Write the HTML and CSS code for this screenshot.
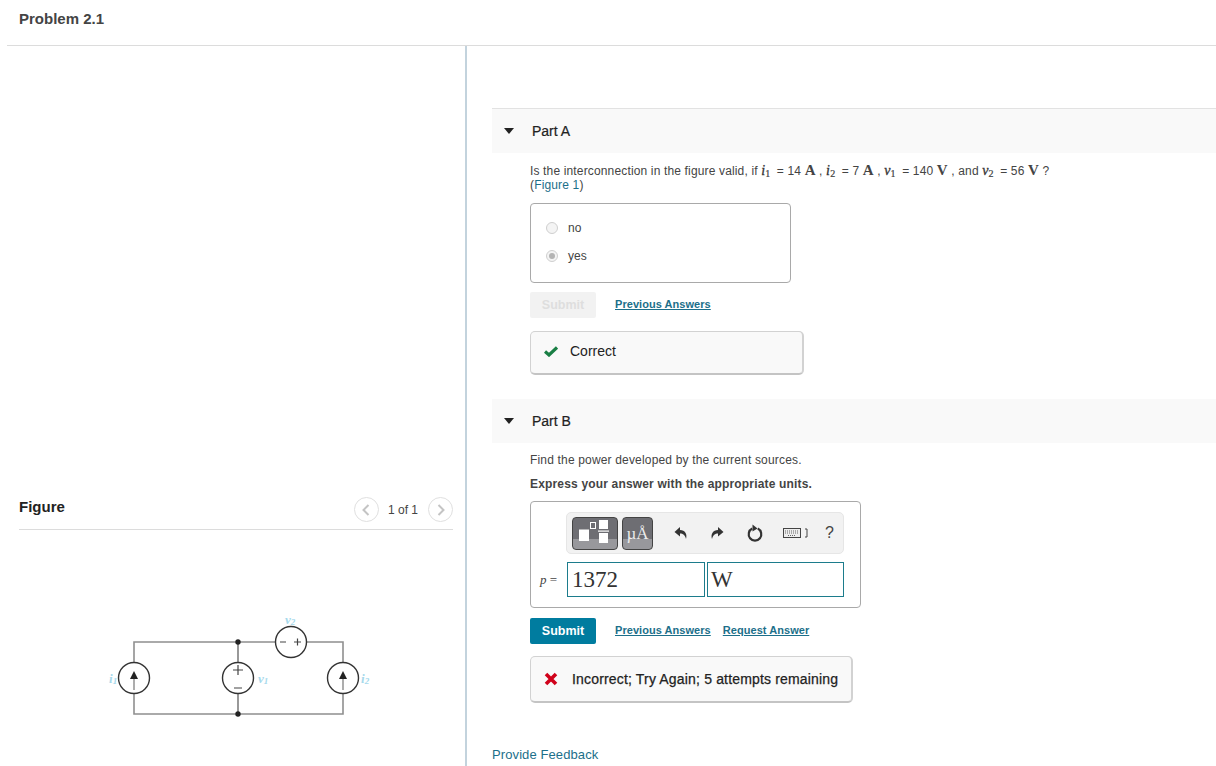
FILE: index.html
```html
<!DOCTYPE html>
<html lang="en">
<head>
<meta charset="utf-8">
<title>Problem 2.1</title>
<link rel="stylesheet" href="styles.css">
</head>
<body>
<header class="page-head"><h1>Problem 2.1</h1></header>
<main class="layout">
  <aside class="figure-pane">
    <div class="figure-head">
      <h2>Figure</h2>
      <div class="pager">
        <span class="round"><svg width="8" height="12" viewBox="0 0 8 12"><path d="M6.500 1 L1.500 6 L6.500 11" fill="none" stroke="#c4c4c4" stroke-width="2"/></svg></span>
        <span class="pager-text">1 of 1</span>
        <span class="round"><svg width="8" height="12" viewBox="0 0 8 12"><path d="M1.500 1 L6.500 6 L1.500 11" fill="none" stroke="#c4c4c4" stroke-width="2"/></svg></span>
      </div>
    </div>
    <svg class="circuit" width="270" height="115" viewBox="0 0 270 115">
      <g fill="none" stroke="#8f8f8f" stroke-width="1.600">
        <path d="M34 52 V32 H175 M207 32 H243 V52"/>
        <path d="M34 84 V104 H243 V84"/>
      </g>
      <g fill="none" stroke="#555" stroke-width="1.200">
        <path d="M138 32 V53 M138 84 V104"/>
      </g>
      <g fill="#fff" stroke="#333" stroke-width="1.400">
        <circle cx="34" cy="68" r="15.500"/>
        <circle cx="138" cy="68" r="15.500"/>
        <circle cx="191" cy="32" r="15.500"/>
        <circle cx="243" cy="68" r="15.500"/>
      </g>
      <g fill="none" stroke="#777" stroke-width="1.200">
        <path d="M34 64 V80 M243 64 V80"/>
      </g>
      <g fill="none" stroke="#444" stroke-width="1.200">
        <path d="M133 60 H143 M138 55 V65 M134 78 H142"/>
        <path d="M180 32 H186 M194 32 H201 M197.500 28.500 V35.500"/>
      </g>
      <path d="M34 61 L30 69 H38 Z M243 61 L239 69 H247 Z" fill="#222"/>
      <circle cx="138" cy="32" r="2.700" fill="#222"/>
      <circle cx="138" cy="104" r="2.700" fill="#222"/>
      <g class="circuit-label">
        <text x="9" y="73">i<tspan class="circuit-sub" dy="1">1</tspan></text>
        <text x="158" y="73">v<tspan class="circuit-sub" dy="1">1</tspan></text>
        <text x="185" y="14">v<tspan class="circuit-sub" dy="1">2</tspan></text>
        <text x="261" y="73">i<tspan class="circuit-sub" dy="1">2</tspan></text>
      </g>
    </svg>
  </aside>
  <section class="question-pane">
    <div class="part-bar">
      <span class="caret"></span><h3>Part A</h3>
    </div>
    <div class="part-body part-a">
      <p class="prompt">Is the interconnection in the figure valid, if <i class="var">i</i><sub>1</sub> = 14 <b class="unit">A</b> , <i class="var">i</i><sub>2</sub> = 7 <b class="unit">A</b> , <i class="var">v</i><sub>1</sub> = 140 <b class="unit">V</b> , and <i class="var">v</i><sub>2</sub> = 56 <b class="unit">V</b> ?<br>(<a class="plain-link">Figure 1</a>)</p>
      <div class="choices">
        <div class="choice"><span class="radio"></span>no</div>
        <div class="choice"><span class="radio checked"></span>yes</div>
      </div>
      <div class="actions">
        <button class="btn disabled">Submit</button>
        <a class="action-link">Previous Answers</a>
      </div>
      <div class="feedback correct">
        <svg width="14" height="11" viewBox="0 0 14 11"><path d="M1 5.500 L5 9 L13 1.500" fill="none" stroke="#1a7f45" stroke-width="3.200"/></svg>
        <span>Correct</span>
      </div>
    </div>
    <div class="part-bar">
      <span class="caret"></span><h3>Part B</h3>
    </div>
    <div class="part-body part-b">
      <p class="find">Find the power developed by the current sources.</p>
      <p class="express">Express your answer with the appropriate units.</p>
      <div class="answer-box">
        <div class="toolbar">
          <span class="tool-btn templates">
            <svg width="44" height="31" viewBox="0 0 44 31">
              <rect x="6" y="11.500" width="10" height="11.500" fill="#fff"/>
              <rect x="17.500" y="4.500" width="5" height="6" fill="none" stroke="#fff"/>
              <rect x="26" y="2" width="9" height="9" fill="#fff"/>
              <rect x="25" y="12.500" width="11" height="1.200" fill="#fff"/>
              <rect x="26" y="15" width="9" height="10" fill="#fff"/>
            </svg>
          </span>
          <span class="tool-btn units">µÅ</span>
          <span class="tool-icons">
            <svg width="14" height="14" viewBox="0 0 14 14"><path d="M6 1 L0.500 6 L6 10.500 V7.500 C9 7.500 11 9 12 13 C13.500 8 11 4 6 4 Z" fill="#333"/></svg>
            <svg width="14" height="14" viewBox="0 0 14 14"><path d="M8 1 L13.500 6 L8 10.500 V7.500 C5 7.500 3 9 2 13 C0.500 8 3 4 8 4 Z" fill="#333"/></svg>
            <svg width="16" height="18" viewBox="0 0 16 18"><path d="M5.200 4.600 A6.300 6.300 0 1 0 10.800 4.600" fill="none" stroke="#333" stroke-width="2.200"/><path d="M5.500 0.500 L10.500 4.500 L5.500 7.500 Z" fill="#333"/></svg>
            <svg class="kbd" width="26" height="12" viewBox="0 0 26 12"><rect x="0.500" y="1.500" width="17" height="9" fill="#eee" stroke="#444"/><path d="M2 4 H16 M2 6 H16 M5 8.500 H13" stroke="#666" stroke-dasharray="1 1"/><path d="M22 2 H24 V10 H22" fill="none" stroke="#444"/></svg>
            <span class="help">?</span>
          </span>
        </div>
        <div class="fields">
          <span class="label"><i>p</i> =</span>
          <span class="field value">1372</span>
          <span class="field unit-field">W</span>
        </div>
      </div>
      <div class="actions">
        <button class="btn primary">Submit</button>
        <a class="action-link">Previous Answers</a>
        <a class="action-link second">Request Answer</a>
      </div>
      <div class="feedback incorrect">
        <svg width="14" height="14" viewBox="0 0 14 14"><path d="M2 2 L12 12 M12 2 L2 12" fill="none" stroke="#d0021b" stroke-width="3.600"/></svg>
        <span>Incorrect; Try Again; 5 attempts remaining</span>
      </div>
    </div>
    <a class="provide">Provide Feedback</a>
  </section>
</main>
</body>
</html>
```
FILE: styles.css
```css
* { box-sizing: border-box; }
html, body { margin: 0; padding: 0; height: 766px; overflow: hidden; background: #fff; }
body { font-family: "Liberation Sans", Arial, sans-serif; color: #333; font-size: 12px; }
h1, h2, h3, p { margin: 0; }

.page-head { height: 46px; margin-left: 7px; border-bottom: 1px solid #dcdcdc; padding: 10px 0 0 12px; }
.page-head h1 { font-size: 15px; line-height: 18px; font-weight: bold; color: #444; }

.layout { display: flex; height: 720px; }
.figure-pane { width: 467px; flex: none; border-right: 2px solid #c3d3dd; padding: 450px 12px 0 19px; }
.figure-head { display: flex; justify-content: space-between; align-items: flex-start; height: 34px; border-bottom: 1px solid #dcdcdc; }
.figure-head h2 { font-size: 15px; line-height: 18px; margin-top: 2px; font-weight: bold; color: #222; }
.pager { display: flex; align-items: center; gap: 10px; margin-top: 1px; }
.round { width: 25px; height: 25px; border: 1px solid #e0e0e0; border-radius: 50%; display: flex; align-items: center; justify-content: center; }
.pager-text { font-size: 12px; color: #444; margin: 1px 0 0 -1px; }
.circuit { display: block; margin: 80px 0 0 81px; }
.circuit-label { font: italic bold 13px "Liberation Serif", serif; fill: #a6d9ec; }
.circuit-sub { font-size: 9px; }

.question-pane { flex: 1; padding: 62px 0 0 25px; min-width: 0; }
.part-bar { height: 45px; background: #f9f9f9; border-top: 1px solid #e2e2e2; display: flex; align-items: center; padding-left: 12px; }
.part-bar + .part-body + .part-bar { border-top: 0; height: 44px; }
.caret { width: 0; height: 0; border-left: 5px solid transparent; border-right: 5px solid transparent; border-top: 6px solid #222; margin-right: 18px; }
.part-bar h3 { font-size: 14px; line-height: 16px; font-weight: normal; color: #222; -webkit-text-stroke: 0.2px #222; }

.part-body { padding-left: 38px; }
.part-a { height: 246px; padding-top: 10px; }
.part-b { height: 303px; padding-top: 10px; }
.prompt { font-size: 12px; line-height: 14px; color: #444; letter-spacing: 0.15px; }
.var { font-family: "Liberation Serif", serif; font-size: 14px; color: #333; -webkit-text-stroke: 0.3px #333; }
.unit { font-family: "Liberation Serif", serif; font-size: 15px; color: #444; }
.prompt sub { font-family: "Liberation Serif", serif; font-size: 10px; line-height: 0; vertical-align: -2px; margin-right: 3px; -webkit-text-stroke: 0.2px #333; }
.plain-link, .provide { color: #1c6f8a; }

.choices { width: 261px; height: 80px; border: 1px solid #a9a9a9; border-radius: 4px; margin-top: 11px; padding-top: 10px; }
.choice { height: 28px; display: flex; align-items: center; padding-left: 15px; gap: 10px; color: #444; }
.radio { width: 12px; height: 12px; border-radius: 50%; border: 1px solid #cfcfcf; background: #f4f4f4; position: relative; }
.radio.checked::after { content: ""; position: absolute; left: 2px; top: 2px; width: 6px; height: 6px; border-radius: 50%; background: #b4b4b4; }

.actions { display: flex; align-items: center; margin-top: 9px; height: 26px; }
.answer-box + .actions { margin-top: 10px; }
.btn { width: 66px; height: 26px; border: 0; border-radius: 2px; font: bold 12.500px "Liberation Sans", Arial, sans-serif; padding: 0; }
.btn.disabled { background: #f2f2f2; color: #dedede; }
.btn.primary { background: #007c9f; color: #fff; }
.action-link { font-size: 11px; font-weight: bold; color: #1c6f8a; text-decoration: underline; margin: -2px 0 0 19px; letter-spacing: 0.05px; }
.action-link.second { margin-left: 12px; }

.feedback { display: flex; align-items: center; background: #f9f9f9; border: 1px solid #d2d2d2; border-bottom: 2px solid #c4c4c4; border-right: 2px solid #d2d2d2; border-radius: 5px; color: #222; font-size: 14px; }
.feedback.correct { width: 274px; height: 44px; margin-top: 13px; padding: 0 0 3px 13px; gap: 12px; }
.feedback.incorrect { width: 323px; height: 47px; margin-top: 12px; padding: 0 0 1px 13px; gap: 14px; -webkit-text-stroke: 0.25px #222; letter-spacing: 0.17px; }

.find { line-height: 14px; color: #444; letter-spacing: 0.17px; }
.express { line-height: 14px; margin-top: 10px; font-weight: bold; color: #444; letter-spacing: 0.17px; }
.answer-box { width: 331px; height: 107px; margin-top: 10px; border: 1px solid #a9a9a9; border-radius: 4px; padding: 10px 16px 0 7px; }
.toolbar { width: 278px; height: 42px; margin-left: 28px; background: #f2f2f2; border: 1px solid #e6e6e6; border-radius: 5px; display: flex; align-items: center; padding-left: 5px; gap: 4px; }
.tool-btn { height: 33px; border-radius: 4px; border: 1px solid #444; background: linear-gradient(#6e6e73 0, #6e6e73 67%, #98989c 67%, #98989c 100%); display: flex; align-items: center; justify-content: center; color: #fff; }
.templates { width: 46px; }
.units { width: 31px; font: 17px "Liberation Serif", serif; color: #ededed; padding-top: 2px; }
.tool-icons { display: flex; align-items: center; margin-left: 17px; color: #444; }
.tool-icons svg:nth-child(2) { margin-left: 22px; }
.tool-icons svg:nth-child(3) { margin-left: 23px; }
.tool-icons .kbd { margin-left: 20px; }
.help { font-size: 16px; margin-left: 16px; }
.fields { display: flex; align-items: center; margin-top: 8px; }
.label { width: 29px; padding-left: 2px; font: 13px "Liberation Serif", serif; color: #444; }
.field { height: 35px; border: 1px solid #1c7c8c; font: 23px/33px "Liberation Serif", serif; color: #333; padding-left: 4px; }
.value { width: 138px; }
.unit-field { width: 137px; margin-left: 2px; padding-left: 3px; }

.provide { font-size: 13px; display: block; line-height: 18px; letter-spacing: 0.1px; }
```
